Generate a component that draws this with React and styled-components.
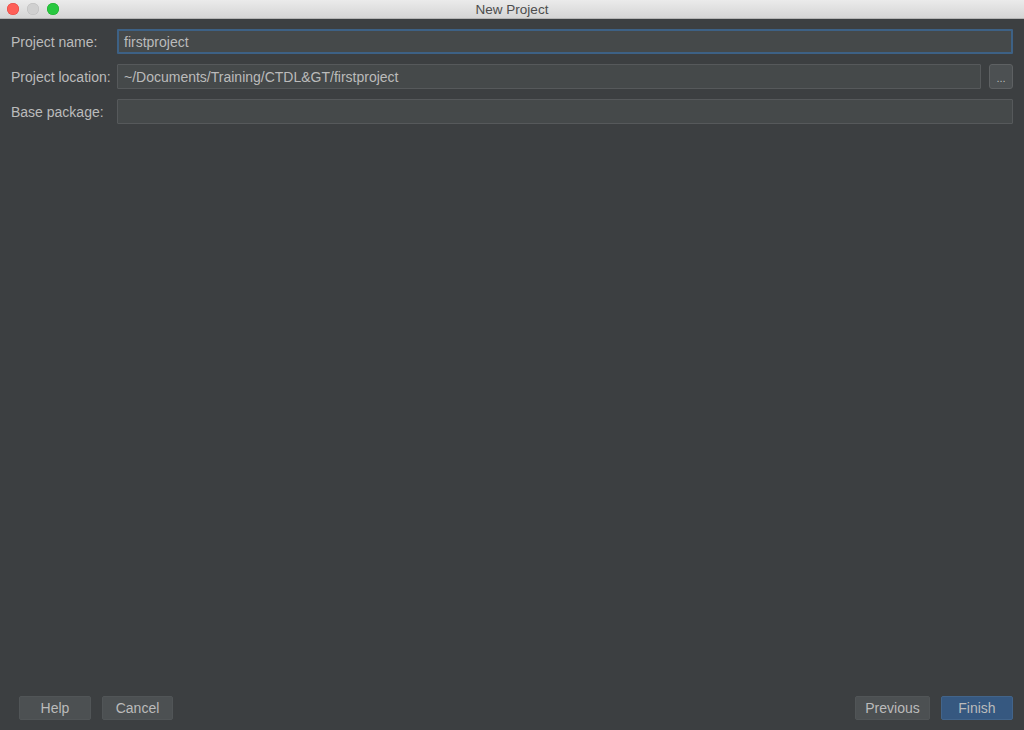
import React from 'react';
import styled, { createGlobalStyle } from 'styled-components';

const GlobalStyle = createGlobalStyle`
  html, body {
    margin: 0;
    padding: 0;
    background: #3c3f41;
  }
  body {
    font-family: "Liberation Sans", Arial, sans-serif;
  }
`;

const Window = styled.div`
  width: 1024px;
  height: 730px;
  display: flex;
  flex-direction: column;
  background: #3c3f41;
  overflow: hidden;
`;

const TitleBar = styled.div`
  height: 18px;
  flex-shrink: 0;
  display: flex;
  align-items: center;
  position: relative;
  background: linear-gradient(#ebebeb, #d5d5d5);
  border-bottom: 1px solid #b4b4b4;
`;

const Lights = styled.div`
  display: flex;
  gap: 8px;
  padding-left: 7px;
`;

const Light = styled.span`
  width: 12px;
  height: 12px;
  border-radius: 50%;
  background: ${p => p.color};
  box-shadow: inset 0 0 0 0.5px ${p => p.edge};
`;

const Title = styled.div`
  position: absolute;
  left: 0;
  right: 0;
  text-align: center;
  font-size: 13.5px;
  color: #4d4d4d;
  pointer-events: none;
`;

const Body = styled.div`
  flex: 1;
  display: flex;
  flex-direction: column;
  justify-content: space-between;
  padding: 10px 11px 10px 11px;
`;

const Form = styled.div`
  display: grid;
  grid-template-columns: 106px 1fr;
  row-gap: 10px;
  align-items: center;
`;

const Label = styled.label`
  font-size: 14px;
  color: #bbbbbb;
  white-space: nowrap;
`;

const FieldRow = styled.div`
  display: flex;
  gap: 8px;
`;

const Input = styled.div`
  flex: 1;
  height: 25px;
  box-sizing: border-box;
  display: flex;
  align-items: center;
  font-size: 14px;
  color: #bbbbbb;
  background: #45494a;
  border: ${p => (p.focused ? '2px solid #3d6185' : '1px solid #56595b')};
  padding: 0 ${p => (p.focused ? '5px' : '6px')};
  border-radius: 1px;
`;

const SmallButton = styled.div`
  width: 24px;
  height: 25px;
  box-sizing: border-box;
  display: flex;
  align-items: center;
  justify-content: center;
  background: #4c5052;
  border: 1px solid #5e6163;
  border-radius: 3px;
  color: #bbbbbb;
  font-size: 11px;
  padding-top: 2px;
`;

const Footer = styled.div`
  display: flex;
  justify-content: space-between;
  padding: 0 0 0 8px;
`;

const ButtonGroup = styled.div`
  display: flex;
  gap: 11px;
`;

const Button = styled.div`
  width: ${p => p.w || 72}px;
  height: 24px;
  box-sizing: border-box;
  display: flex;
  align-items: center;
  justify-content: center;
  font-size: 14px;
  color: #bbbbbb;
  background: ${p => (p.primary ? '#365880' : '#4c5052')};
  border: 1px solid ${p => (p.primary ? '#42648a' : '#515557')};
  border-radius: 2px;
`;

export default function App() {
  return (
    <>
      <GlobalStyle />
      <Window>
        <TitleBar>
          <Lights>
            <Light color="#fe5f57" edge="#e0443e" />
            <Light color="#d0d0d0" edge="#bcbcbc" />
            <Light color="#28c840" edge="#1aab29" />
          </Lights>
          <Title>New Project</Title>
        </TitleBar>
        <Body>
          <Form>
            <Label>Project name:</Label>
            <FieldRow>
              <Input focused>firstproject</Input>
            </FieldRow>
            <Label>Project location:</Label>
            <FieldRow>
              <Input>~/Documents/Training/CTDL&amp;GT/firstproject</Input>
              <SmallButton>...</SmallButton>
            </FieldRow>
            <Label>Base package:</Label>
            <FieldRow>
              <Input />
            </FieldRow>
          </Form>
          <Footer>
            <ButtonGroup>
              <Button w={72}>Help</Button>
              <Button w={71}>Cancel</Button>
            </ButtonGroup>
            <ButtonGroup>
              <Button w={75}>Previous</Button>
              <Button w={72} primary>Finish</Button>
            </ButtonGroup>
          </Footer>
        </Body>
      </Window>
    </>
  );
}
